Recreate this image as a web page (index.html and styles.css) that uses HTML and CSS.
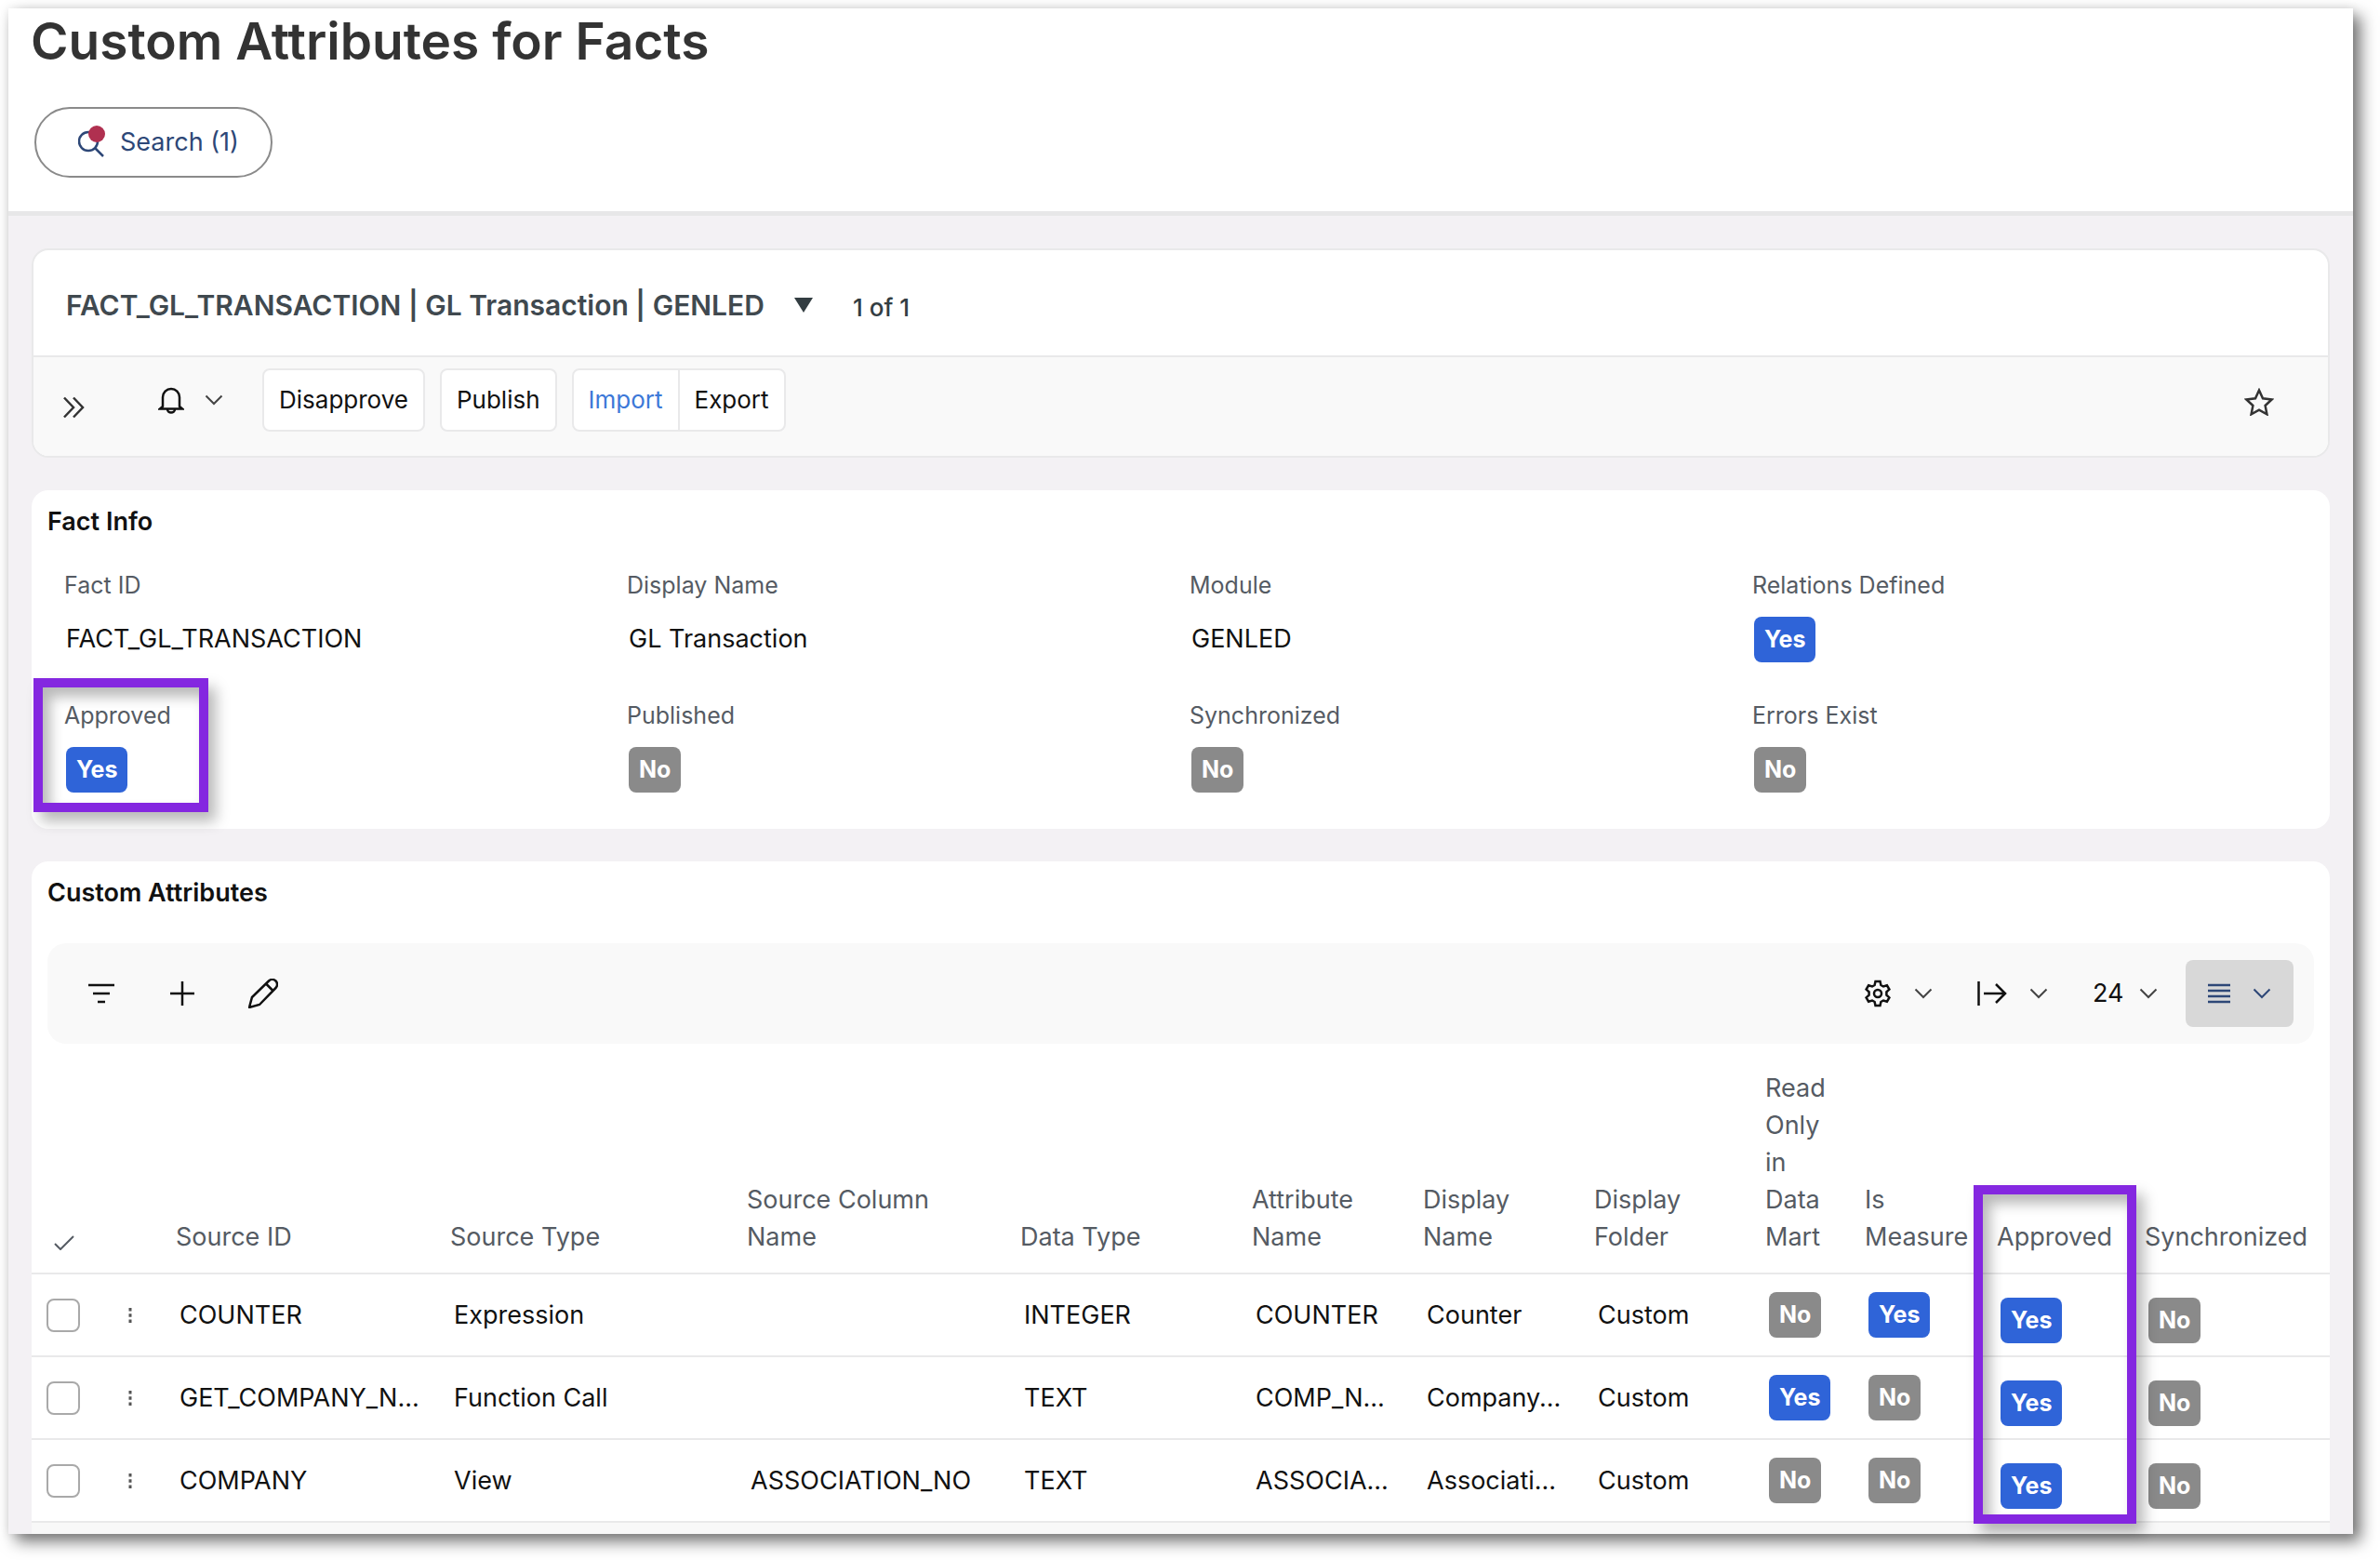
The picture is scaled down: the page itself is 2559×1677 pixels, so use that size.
FILE: index.html
```html
<!DOCTYPE html>
<html lang="en">
<head>
  <meta charset="UTF-8">
  <meta name="viewport" content="width=device-width, initial-scale=1.0">
  <title>Custom Attributes for Facts</title>
  <link rel="stylesheet" href="styles.css">
</head>
<body>
  <!-- shared icons -->
  <svg class="sprite" aria-hidden="true">
    <symbol id="chevron" viewBox="0 0 20 12"><path d="M1.5 1.5 L10 10 L18.5 1.5"/></symbol>
    <symbol id="dots" viewBox="0 0 6 22"><path d="M3 3v3.5M3 9.200v3.500M3 15.500v3.500"/></symbol>
  </svg>

  <div class="window">
    <header class="page-header">
      <h1>Custom Attributes for Facts</h1>
      <button class="search" type="button">
        <svg class="icon" width="30" height="36" viewBox="0 0 30 36">
          <circle cx="11" cy="17" r="10"/>
          <path d="M18 24l9 9"/>
          <circle class="dot" cx="20" cy="9" r="9"/>
        </svg>
        Search (1)
      </button>
    </header>

    <main class="content">
      <section class="card record">
        <div class="record-head">
          <label class="record-picker">
            <select aria-label="Record">
              <option>FACT_GL_TRANSACTION | GL Transaction | GENLED</option>
            </select>
            <svg class="triangle" width="20" height="16" viewBox="0 0 20 16"><path d="M0 0h20l-10 16z"/></svg>
          </label>
          <span class="record-count">1 of 1</span>
        </div>
        <div class="record-bar">
          <button class="icon-btn expand" type="button" aria-label="Expand">
            <svg class="icon" width="24" height="24" viewBox="0 0 24 24"><path d="M2 1.500l10 10.500l-10 10.500M12 1.500l10 10.500l-10 10.500"/></svg>
          </button>
          <div class="commands">
            <button class="icon-btn bell" type="button" aria-label="Notifications">
              <svg class="icon" width="28" height="30" viewBox="0 0 28 30">
                <path d="M5 22V12a9 9 0 0 1 18 0v10l3 2.500H2zM10 25a4 3.500 0 0 0 8 0"/>
              </svg>
              <svg class="icon chevron" width="20" height="12"><use href="#chevron"/></svg>
            </button>
            <button class="cmd" type="button">Disapprove</button>
            <button class="cmd" type="button">Publish</button>
            <div class="cmd-group">
              <button class="cmd active" type="button">Import</button>
              <button class="cmd" type="button">Export</button>
            </div>
          </div>
          <button class="icon-btn star" type="button" aria-label="Favorite">
            <svg class="icon" width="32" height="30" viewBox="0 0 32 30">
              <path d="M16 2.500l4 8.800 9.600 1.200-7 6.500 1.800 9.300-8.400-4.600-8.400 4.600 1.800-9.300-7-6.500 9.600-1.200z"/>
            </svg>
          </button>
        </div>
      </section>

      <section class="card fact-info">
        <h2>Fact Info</h2>
        <dl class="facts">
          <div class="fact"><dt>Fact ID</dt><dd>FACT_GL_TRANSACTION</dd></div>
          <div class="fact"><dt>Display Name</dt><dd>GL Transaction</dd></div>
          <div class="fact"><dt>Module</dt><dd>GENLED</dd></div>
          <div class="fact"><dt>Relations Defined</dt><dd><span class="badge yes">Yes</span></dd></div>
          <div class="fact marked"><dt>Approved</dt><dd><span class="badge yes">Yes</span></dd></div>
          <div class="fact"><dt>Published</dt><dd><span class="badge">No</span></dd></div>
          <div class="fact"><dt>Synchronized</dt><dd><span class="badge">No</span></dd></div>
          <div class="fact"><dt>Errors Exist</dt><dd><span class="badge">No</span></dd></div>
        </dl>
      </section>

      <section class="card attributes">
        <h2>Custom Attributes</h2>
        <div class="toolbar">
          <div class="tools">
            <button class="icon-btn" type="button" aria-label="Filter">
              <svg class="icon" width="32" height="32" viewBox="0 0 32 32"><path d="M2 7h28M7 16h18M12 25h8"/></svg>
            </button>
            <button class="icon-btn" type="button" aria-label="Add">
              <svg class="icon" width="32" height="32" viewBox="0 0 32 32"><path d="M3 16h26M16 3v26"/></svg>
            </button>
            <button class="icon-btn" type="button" aria-label="Edit">
              <svg class="icon" width="32" height="32" viewBox="0 0 32 32">
                <path d="M1 31l3-11L22 2.500a5 5 0 0 1 7.500 7.500L12 28zM19 5.500l7.500 7.500"/>
              </svg>
            </button>
          </div>
          <div class="tools right">
            <button class="icon-btn" type="button" aria-label="Settings">
              <svg class="icon" width="30" height="30" viewBox="0 0 30 30">
                <path d="M12.500 2h5l.9 4 2.600 1.500 3.900-1.200 2.500 4.300-3 2.800v3.200l3 2.800-2.500 4.300-3.900-1.200-2.600 1.500-.9 4h-5l-.9-4-2.600-1.500-3.900 1.200-2.500-4.300 3-2.800v-3.200l-3-2.800 2.500-4.300 3.900 1.200 2.600-1.500z"/>
                <circle cx="15" cy="15" r="4"/>
              </svg>
              <svg class="icon chevron" width="20" height="12"><use href="#chevron"/></svg>
            </button>
            <button class="icon-btn" type="button" aria-label="Export rows">
              <svg class="icon" width="32" height="26" viewBox="0 0 32 26"><path d="M1.500 0v26M7 13h23M20 3l10 10-10 10"/></svg>
              <svg class="icon chevron" width="20" height="12"><use href="#chevron"/></svg>
            </button>
            <label class="page-size">
              <select aria-label="Rows per page"><option>24</option></select>
              <svg class="icon chevron" width="20" height="12"><use href="#chevron"/></svg>
            </label>
            <button class="icon-btn view" type="button" aria-label="View">
              <svg class="icon" width="24" height="22" viewBox="0 0 24 22"><path d="M0 2h24M0 8h24M0 14h24M0 20h24"/></svg>
              <svg class="icon chevron" width="20" height="12"><use href="#chevron"/></svg>
            </button>
          </div>
        </div>

        <table>
          <colgroup>
            <col class="c-check"><col class="c-menu"><col class="c-id"><col class="c-type"><col class="c-column"><col class="c-data">
            <col class="c-name"><col class="c-name"><col class="c-name"><col class="c-read"><col class="c-measure"><col class="c-approved"><col class="c-sync">
          </colgroup>
          <thead>
            <tr>
              <th class="check"><svg class="icon tick" width="22" height="16" viewBox="0 0 22 16"><path d="M1 9l6 6L21 1"/></svg></th>
              <th></th>
              <th>Source ID</th>
              <th>Source Type</th>
              <th>Source Column Name</th>
              <th>Data Type</th>
              <th>Attribute Name</th>
              <th>Display Name</th>
              <th>Display Folder</th>
              <th>Read Only in Data Mart</th>
              <th>Is Measure</th>
              <th class="marked-col">Approved</th>
              <th>Synchronized</th>
            </tr>
          </thead>
          <tbody>
            <tr>
              <td class="check"><input type="checkbox" aria-label="Select COUNTER"></td>
              <td class="menu"><svg class="icon dots" width="6" height="22"><use href="#dots"/></svg></td>
              <td>COUNTER</td>
              <td>Expression</td>
              <td></td>
              <td>INTEGER</td>
              <td>COUNTER</td>
              <td>Counter</td>
              <td>Custom</td>
              <td><span class="badge">No</span></td>
              <td><span class="badge yes">Yes</span></td>
              <td class="low"><span class="badge yes">Yes</span></td>
              <td class="low"><span class="badge">No</span></td>
            </tr>
            <tr>
              <td class="check"><input type="checkbox" aria-label="Select GET_COMPANY_N..."></td>
              <td class="menu"><svg class="icon dots" width="6" height="22"><use href="#dots"/></svg></td>
              <td>GET_COMPANY_N...</td>
              <td>Function Call</td>
              <td></td>
              <td>TEXT</td>
              <td>COMP_N...</td>
              <td>Company...</td>
              <td>Custom</td>
              <td><span class="badge yes">Yes</span></td>
              <td><span class="badge">No</span></td>
              <td class="low"><span class="badge yes">Yes</span></td>
              <td class="low"><span class="badge">No</span></td>
            </tr>
            <tr>
              <td class="check"><input type="checkbox" aria-label="Select COMPANY"></td>
              <td class="menu"><svg class="icon dots" width="6" height="22"><use href="#dots"/></svg></td>
              <td>COMPANY</td>
              <td>View</td>
              <td>ASSOCIATION_NO</td>
              <td>TEXT</td>
              <td>ASSOCIA...</td>
              <td>Associati...</td>
              <td>Custom</td>
              <td><span class="badge">No</span></td>
              <td><span class="badge">No</span></td>
              <td class="low"><span class="badge yes">Yes</span></td>
              <td class="low"><span class="badge">No</span></td>
            </tr>
          </tbody>
        </table>
      </section>
    </main>
  </div>
</body>
</html>
```

FILE: styles.css
```css
*, *::after {
  box-sizing: border-box;
}
body {
  margin: 0;
  background: #fff;
  color: #111;
  font-family: Inter, "Liberation Sans", sans-serif;
  font-size: 27px;
  line-height: 40px;
}
h1, h2, dl, dd {
  margin: 0;
}
button, select {
  font: inherit;
  color: inherit;
  padding: 0;
  border: 0;
  background: none;
  cursor: pointer;
}
select {
  appearance: none;
}
.sprite {
  position: absolute;
  width: 0;
  height: 0;
}
.icon {
  display: block;
  fill: none;
  stroke: currentColor;
  stroke-width: 2.5;
}
.chevron {
  color: #444;
  stroke-width: 2;
}

.window {
  margin: 9px 29px 29px 9px;
  background: #f3f1f4;
  box-shadow: 8px 8px 16px rgba(0, 0, 0, 0.55), 0 0 10px rgba(0, 0, 0, 0.08);
}

/* header */
.page-header {
  padding: 4px 24px 36px;
  background: #fff;
  border-bottom: 5px solid #e7e7e8;
}
h1 {
  font-size: 55px;
  line-height: 62px;
  font-weight: 600;
  color: #333;
}
.search {
  display: flex;
  align-items: center;
  gap: 15px;
  height: 76px;
  margin: 40px 0 0 4px;
  padding: 0 34px 0 45px;
  border: 2px solid #8a8a8a;
  border-radius: 38px;
  background: #fff;
  color: #2d4777;
}
.search .dot {
  fill: #b03050;
  stroke: none;
}

.content {
  display: flex;
  flex-direction: column;
  gap: 35px;
  padding: 35px 25px 0;
}
.card {
  background: #fff;
  border-radius: 18px;
}

/* record card */
.record {
  border: 2px solid #e9e9ea;
  overflow: hidden;
}
.record-head {
  display: flex;
  align-items: center;
  gap: 43px;
  padding: 36px 35px 31px;
}
.record-picker {
  display: flex;
  align-items: center;
  gap: 32px;
  color: #40494f;
  font-size: 30px;
  font-weight: 600;
}
.triangle {
  fill: #333d42;
}
.record-count {
  padding-top: 6px;
  color: #333d42;
  font-size: 26px;
  font-weight: 500;
}
.record-bar {
  display: flex;
  align-items: center;
  padding: 12px 58px 26px 31px;
  background: #f9f9f9;
  border-top: 2px solid #e9e9ea;
}
.icon-btn {
  display: flex;
  align-items: center;
  gap: 24px;
}
.expand {
  padding-top: 16px;
  color: #333;
}
.commands {
  display: flex;
  align-items: center;
  gap: 16px;
  margin-left: 79px;
}
.bell {
  gap: 22px;
  margin-right: 26px;
}
.cmd-group {
  display: flex;
}
.cmd {
  height: 68px;
  padding: 0 16px;
  border: 2px solid #e9e9ea;
  border-radius: 8px;
  background: #fff;
  font-size: 26px;
}
.cmd.active {
  color: #3c78d8;
}
.cmd-group .cmd:first-child {
  border-radius: 8px 0 0 8px;
}
.cmd-group .cmd:last-child {
  margin-left: -2px;
  border-radius: 0 8px 8px 0;
}
.star {
  margin-left: auto;
  padding-top: 4px;
  color: #333;
}

/* fact info */
h2 {
  padding: 14px 17px 0;
  font-size: 27px;
  line-height: 40px;
  font-weight: 600;
}
.facts {
  display: grid;
  grid-template-columns: repeat(4, 1fr);
  row-gap: 37px;
  padding: 28px 16px 39px 35px;
}
.fact {
  position: relative;
}
dt {
  color: #555b63;
  font-size: 25px;
}
dd {
  display: flex;
  align-items: center;
  height: 50px;
  padding-left: 2px;
  margin-top: 13px;
}
.badge {
  display: inline-block;
  padding: 0 11px;
  border-radius: 8px;
  background: #8a8a8a;
  color: #fff;
  font-size: 25px;
  line-height: 49px;
  font-weight: 700;
}
.badge.yes {
  background: #2f64d8;
}

/* purple highlight frames */
.marked::after, .marked-col::after {
  content: "";
  position: absolute;
  border: 10px solid #8427e0;
  box-shadow: 8px 10px 14px rgba(0, 0, 0, 0.28), inset 8px 10px 14px rgba(0, 0, 0, 0.28);
  pointer-events: none;
}
.marked::after {
  top: -20px;
  left: -33px;
  width: 188px;
  height: 144px;
}
.marked-col {
  position: relative;
}
.marked-col::after {
  bottom: -270px;
  left: -13px;
  width: 175px;
  height: 364px;
}

/* custom attributes */
.attributes {
  border-radius: 18px 18px 0 0;
  border-bottom: 12px solid #f8f8f8;
}
.toolbar {
  display: flex;
  align-items: center;
  justify-content: space-between;
  height: 108px;
  margin: 34px 17px 0;
  padding: 0 22px 0 42px;
  border-radius: 20px;
  background: #f9f9f9;
}
.tools {
  display: flex;
  align-items: center;
  gap: 55px;
}
.tools.right {
  gap: 48px;
}
.page-size {
  display: flex;
  align-items: center;
  gap: 16px;
}
.tools .view {
  height: 72px;
  margin-left: -18px;
  padding: 0 24px;
  border-radius: 8px;
  background: #d8d8d8;
  color: #2d4777;
}
.view .chevron {
  color: #2d4777;
}

table {
  width: 100%;
  table-layout: fixed;
  border-collapse: collapse;
}
th {
  padding: 28px 16px 18px 12px;
  color: #555b63;
  font-weight: 400;
  text-align: left;
  vertical-align: bottom;
}
td {
  height: 89px;
  padding: 0 0 0 16px;
  white-space: nowrap;
}
tr {
  border-bottom: 2px solid #e9e9ea;
}
td.low {
  padding-top: 12px;
}
th.check {
  padding: 0 0 24px 24px;
}
.tick {
  stroke-width: 2;
}
.dots {
  margin-left: 16px;
  color: #555;
  stroke-width: 3;
}
input[type="checkbox"] {
  appearance: none;
  display: block;
  width: 36px;
  height: 36px;
  margin: 0;
  border: 2px solid #a9a9a9;
  border-radius: 8px;
  background: #fff;
}
.c-check { width: 71px; }
.c-menu { width: 72px; }
.c-id { width: 295px; }
.c-type { width: 319px; }
.c-column { width: 294px; }
.c-data { width: 249px; }
.c-name { width: 184px; }
.c-read { width: 107px; }
.c-measure { width: 142px; }
.c-approved { width: 159px; }
.c-sync { width: 211px; }
```
